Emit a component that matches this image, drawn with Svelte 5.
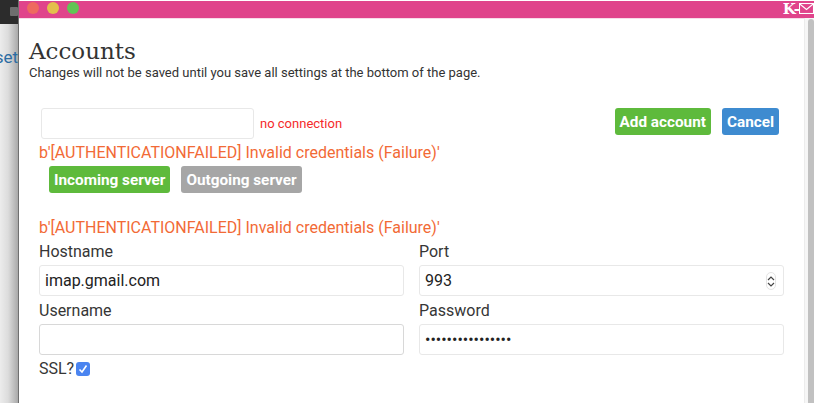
<script>
  let host = $state('imap.gmail.com');
  let port = $state(993);
  let username = $state('');
  let password = $state('xxxxxxxxxxxxxxxx');
  let ssl = $state(true);
  let account = $state('');
  const errorText = "b'[AUTHENTICATIONFAILED] Invalid credentials (Failure)'";
</script>

<div class="page">
  <aside class="backdrop">
    <div class="dock"><span class="dock-icon"></span></div>
    <div class="behind"><span class="link">set</span></div>
  </aside>

  <main class="window">
    <header class="titlebar">
      <div class="lights">
        <span class="light red"></span>
        <span class="light yellow"></span>
        <span class="light green"></span>
      </div>
      <div class="brand">
        <span class="k">K-</span>
        <svg width="15" height="11" viewBox="0 0 15 11" fill="none" stroke="#fff" stroke-width="1.1">
          <rect x="0.5" y="0.5" width="14" height="10"/>
          <path d="M0.5 0.8 7.5 6.5 14.5 0.8"/>
        </svg>
      </div>
    </header>

    <div class="body">
      <section class="content">
        <h1>Accounts</h1>
        <p class="note">Changes will not be saved until you save all settings at the bottom of the page.</p>

        <div class="account-row">
          <input class="account-select" bind:value={account} aria-label="Account" />
          <span class="status">no connection</span>
          <div class="actions">
            <button class="btn green">Add account</button>
            <button class="btn blue">Cancel</button>
          </div>
        </div>

        <p class="error first">{errorText}</p>

        <div class="tabs">
          <button class="btn green">Incoming server</button>
          <button class="btn gray">Outgoing server</button>
        </div>

        <p class="error second">{errorText}</p>

        <div class="fields">
          <label class="field">
            <span>Hostname</span>
            <input type="text" bind:value={host} />
          </label>
          <label class="field">
            <span>Port</span>
            <div class="port">
              <input type="text" bind:value={port} />
              <span class="stepper">
                <svg width="8" height="5" viewBox="0 0 8 5" fill="none" stroke="#444" stroke-width="1.2"><path d="M1 4 4 1 7 4"/></svg>
                <svg width="8" height="5" viewBox="0 0 8 5" fill="none" stroke="#444" stroke-width="1.2"><path d="M1 1 4 4 7 1"/></svg>
              </span>
            </div>
          </label>
          <label class="field">
            <span>Username</span>
            <input class="strong" type="text" bind:value={username} />
          </label>
          <label class="field">
            <span>Password</span>
            <input type="password" bind:value={password} />
          </label>
        </div>

        <label class="ssl">
          <span>SSL?</span>
          <input type="checkbox" bind:checked={ssl} class="native" />
          <span class="check">
            <svg width="10" height="10" viewBox="0 0 10 10" fill="none" stroke="#fff" stroke-width="1.6"><path d="M1.5 5.5 4 8 8.5 1.5"/></svg>
          </span>
        </label>
      </section>

      <div class="scrollbar"><div class="thumb"></div></div>
    </div>
  </main>
</div>

<style>
  :global(body) { margin: 0; background: #fff; }
  .page {
    display: flex;
    width: 814px;
    height: 403px;
    overflow: hidden;
    font-family: Roboto, "Liberation Sans", sans-serif;
    color: #363636;
  }
  .backdrop {
    flex: 0 0 19px;
    min-width: 0;
    overflow: hidden;
    display: flex;
    flex-direction: column;
    border-right: 1px solid #6f6f6f;
    box-sizing: border-box;
  }
  .dock {
    height: 24px;
    background: #2c2c2c;
    display: flex;
    justify-content: flex-end;
    align-items: center;
    padding: 0 0 2px;
    box-sizing: border-box;
  }
  .dock-icon {
    width: 8px;
    height: 9px;
    background: #6e6e6e;
    border-radius: 1px;
  }
  .behind {
    flex: 1;
    background: linear-gradient(90deg, #ececec 0%, #dcdcdc 45%, #a9a9a9 100%);
    display: flex;
    justify-content: flex-end;
    padding-top: 23px;
    overflow: hidden;
  }
  .link {
    color: #2b6ca3;
    font-size: 17px;
    line-height: 20px;
    white-space: nowrap;
    flex: none;
  }
  .window {
    flex: 1;
    min-width: 0;
    background: #fff;
    display: flex;
    flex-direction: column;
  }
  .titlebar {
    height: 17px;
    margin-top: 1px;
    background: #e0448b;
    display: flex;
    justify-content: space-between;
    align-items: center;
    box-shadow: 0 1px 0 #f7dde9;
  }
  .lights {
    display: flex;
    gap: 8px;
    padding-left: 8px;
    margin-top: -4px;
  }
  .light { width: 12px; height: 12px; border-radius: 50%; }
  .red { background: #ee6a5f; }
  .yellow { background: #e3bf4c; }
  .green { background: #62c454; }
  .brand {
    display: flex;
    align-items: center;
    color: #fff;
    margin-top: -2px;
  }
  .k {
    font-family: "DejaVu Serif", serif;
    font-weight: 700;
    font-size: 15px;
    line-height: 14px;
    letter-spacing: -1px;
  }
  .body { flex: 1; display: flex; min-height: 0; }
  .content { flex: 1; min-width: 0; padding: 20px 0 0 10px; }
  h1 {
    margin: 0;
    font-family: "DejaVu Serif", serif;
    font-weight: 400;
    font-size: 23px;
    line-height: 27px;
    color: #333;
  }
  .note {
    margin: -2px 0 0;
    font-size: 13px;
    line-height: 20px;
    color: #333;
  }
  .account-row {
    display: flex;
    align-items: flex-start;
    margin: 25px 25px 0 12px;
  }
  input {
    box-sizing: border-box;
    border: 1px solid #e8e8e8;
    border-radius: 3px;
    background: #fff;
    font: inherit;
    font-size: 16px;
    color: #222;
    outline: none;
    height: 31px;
    padding: 0 5px;
    width: 100%;
  }
  .account-select { width: 213px; flex: none; }
  .status {
    margin-left: 6px;
    align-self: center;
    color: #f52a2a;
    font-size: 13px;
  }
  .actions { margin-left: auto; display: flex; gap: 11px; }
  .btn {
    border: 1px solid transparent;
    border-radius: 3px;
    color: #fff;
    font: inherit;
    font-weight: 700;
    font-size: 15.3px;
    height: 27px;
    padding: 0 4px;
  }
  .btn.green { background: #5eba3c; }
  .btn.blue { background: #3e8bd0; }
  .btn.gray { background: #a6a6a6; }
  .error {
    margin: 0 0 0 10px;
    color: #f26a36;
    font-size: 16px;
    line-height: 20px;
  }
  .error.first { margin-top: 4px; }
  .error.second { margin-top: 25px; }
  .tabs { display: flex; gap: 11px; margin: 3px 0 0 20px; }
  .fields {
    display: grid;
    grid-template-columns: 365px 365px;
    column-gap: 15px;
    row-gap: 2px;
    margin: 1px 0 0 10px;
  }
  .field { display: block; }
  .field > span {
    display: block;
    font-size: 16px;
    line-height: 26px;
    color: #363636;
  }
  .strong { border: 1px solid #d8d8d8; }
  .port { position: relative; }
  .stepper {
    position: absolute;
    right: 8px;
    top: 7px;
    width: 10px;
    height: 18px;
    box-sizing: border-box;
    border: 1px solid #e4e4e4;
    border-radius: 6px;
    display: flex;
    flex-direction: column;
    align-items: center;
    justify-content: center;
    gap: 1px;
  }
  .ssl {
    display: flex;
    align-items: center;
    gap: 2px;
    margin: 3px 0 0 10px;
    font-size: 16px;
    line-height: 22px;
    position: relative;
  }
  .native { position: absolute; opacity: 0; width: 14px; height: 14px; left: 36px; }
  .check {
    width: 14px;
    height: 14px;
    border-radius: 3px;
    background: #4a84f0;
    display: flex;
    align-items: center;
    justify-content: center;
  }
  .scrollbar {
    flex: 0 0 10px;
    background: #f6f6f6;
    padding: 1px 0 0 3px;
    box-sizing: border-box;
    border-left: 1px solid #ececec;
  }
  .thumb { height: 100%; background: #c1c1c1; border-radius: 4px 4px 0 0; }
</style>
